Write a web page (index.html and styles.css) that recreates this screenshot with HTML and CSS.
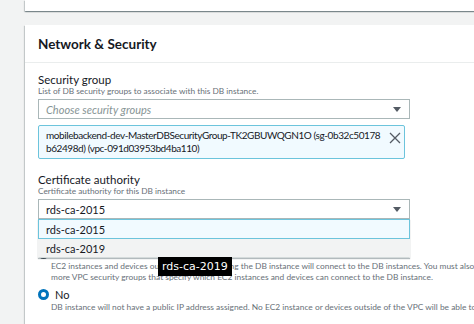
FILE: index.html
```html
<!DOCTYPE html>
<html>
<head>
<meta charset="utf-8">
<link rel="stylesheet" href="styles.css">
</head>
<body>
<div class="page">
  <div class="card card-top"></div>
  <div class="card">
    <div class="card-header"><h2>Network &amp; Security</h2></div>
    <div class="card-body">
      <div class="field">
        <div class="label">Security group</div>
        <div class="desc">List of DB security groups to associate with this DB instance.</div>
        <div class="select placeholder">
          <span>Choose security groups</span>
          <span class="caret"></span>
        </div>
        <div class="token">
          <span class="token-text">mobilebackend-dev-MasterDBSecurityGroup-TK2GBUWQGN1O (sg-0b32c50178<br>b62498d) (vpc-091d03953bd4ba110)</span>
          <svg class="dismiss" width="12" height="12" viewBox="0 0 12 12"><path d="M1 1L11 11M11 1L1 11" stroke="#545b64" stroke-width="1.3" fill="none"/></svg>
        </div>
      </div>
      <div class="field field-ca">
        <div class="label">Certificate authority</div>
        <div class="desc">Certificate authority for this DB instance</div>
        <div class="select-wrap">
          <div class="select">
            <span>rds-ca-2015</span>
            <span class="caret"></span>
          </div>
          <ul class="dropdown">
            <li class="option selected">rds-ca-2015</li>
            <li class="option hovered">rds-ca-2019</li>
          </ul>
          <div class="tooltip">rds-ca-2019</div>
        </div>
      </div>
      <div class="field field-public">
        <div class="label">Public accessibility</div>
        <div class="radio-row">
          <span class="radio"></span>
          <span class="radio-label">Yes</span>
        </div>
        <div class="radio-desc">EC2 instances and devices outside the VPC hosting the DB instance will connect to the DB instances. You must also select one or<br>more VPC security groups that specify which EC2 instances and devices can connect to the DB instance.</div>
        <div class="radio-row row-no">
          <span class="radio checked"></span>
          <span class="radio-label">No</span>
        </div>
        <div class="radio-desc">DB instance will not have a public IP address assigned. No EC2 instance or devices outside of the VPC will be able to connect.</div>
      </div>
    </div>
  </div>
</div>
</body>
</html>
```
FILE: styles.css
```css
* { box-sizing: border-box; }
html, body { margin: 0; padding: 0; }
body {
  background: #f2f3f3;
  font-family: "Lato", "Open Sans", sans-serif;
  color: #16191f;
  width: 474px;
  height: 324px;
  overflow: hidden;
}
.page {
  padding-left: 25px;
  width: 474px;
  overflow: hidden;
}
.card {
  background: #fff;
  box-shadow: 0 1px 1px 0 rgba(0, 28, 36, 0.3), 1px 1px 1px 0 rgba(0, 28, 36, 0.15), -1px 1px 1px 0 rgba(0, 28, 36, 0.15);
}
.card-top {
  height: 11px;
  margin-right: -10px;
}
.card-top + .card {
  margin-top: 14px;
  margin-right: -10px;
  height: 300px;
}
.card-header {
  height: 38px;
  border-bottom: 1px solid #eaeded;
  padding: 0 13px;
  display: flex;
  align-items: center;
}
.card-header h2 {
  margin: 0;
  font-size: 13.5px;
  font-weight: 700;
  line-height: 16px;
}
.card-body {
  padding: 10px 0 0 13px;
  width: 372px;
  box-sizing: content-box;
}
.label {
  font-size: 11.5px;
  line-height: 13px;
  color: #16191f;
}
.desc {
  font-size: 8.3px;
  line-height: 11px;
  color: #687078;
}
.select {
  margin-top: 2px;
  height: 20px;
  border: 1px solid #aab7b8;
  display: flex;
  align-items: center;
  justify-content: space-between;
  padding: 0 8px 0 7px;
  font-size: 11px;
  background: #fff;
}
.placeholder span:first-child {
  color: #879596;
  font-style: italic;
}
.caret {
  width: 0;
  height: 0;
  border-left: 4px solid transparent;
  border-right: 4px solid transparent;
  border-top: 5px solid #545b64;
  flex: none;
}
.token {
  margin-top: 6px;
  width: 367px;
  height: 34px;
  background: #f1faff;
  border: 1px solid #6cc4dc;
  border-radius: 2px;
  display: flex;
  align-items: flex-start;
  padding: 3px 3px 0 7px;
  gap: 4px;
}
.token-text {
  flex: 1;
  min-width: 0;
  overflow: hidden;
  font-size: 10px;
  letter-spacing: -0.42px;
  line-height: 13px;
  white-space: nowrap;
}
.dismiss {
  flex: none;
  margin-top: 3px;
}
.field-ca {
  margin-top: 14px;
}
.select-wrap {
  position: relative;
}
.dropdown {
  position: absolute;
  left: 0;
  right: 0;
  top: 20px;
  margin: 0;
  padding: 0;
  list-style: none;
  z-index: 2;
  background: #fff;
  box-shadow: 0 1px 1px 0 rgba(0, 28, 36, 0.3);
}
.option {
  height: 20px;
  display: flex;
  align-items: center;
  padding: 0 7px;
  font-size: 11px;
  border: 1px solid transparent;
}
.option.selected {
  background: #f1faff;
  border-color: #6cc4dc;
}
.option.hovered {
  background: #f2f3f3;
  height: 19px;
  border-bottom-color: #d5dbdb;
}
.tooltip {
  position: absolute;
  left: 120px;
  top: 58px;
  z-index: 3;
  background: #000;
  color: #fff;
  font-family: "DejaVu Sans", sans-serif;
  font-size: 11px;
  line-height: 19px;
  padding: 0 4px;
}
.field-public {
  margin-top: 9px;
}
.radio-row {
  display: flex;
  align-items: center;
  gap: 6px;
  margin-top: 6px;
  height: 13px;
}
.radio {
  width: 11px;
  height: 11px;
  border-radius: 50%;
  border: 2px solid #545b64;
  background: #fff;
  flex: none;
}
.radio.checked {
  border: 3px solid #0073bb;
}
.radio-label {
  font-size: 11px;
}
.radio-desc {
  padding-left: 13px;
  font-size: 8.4px;
  line-height: 11px;
  color: #687078;
  white-space: nowrap;
  margin-top: 1px;
}
.row-no {
  margin-top: 5px;
}
```
